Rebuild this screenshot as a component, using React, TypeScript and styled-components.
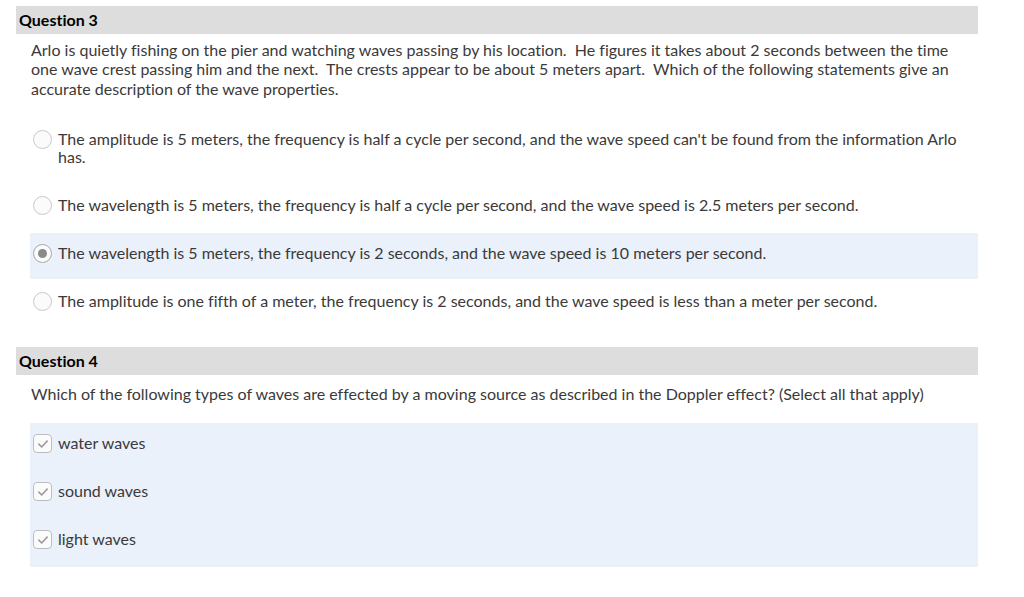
import React from "react";
import styled, { createGlobalStyle } from "styled-components";

const GlobalStyle = createGlobalStyle`
  html, body {
    margin: 0;
    padding: 0;
    background: #ffffff;
  }
  body {
    font-family: Lato, "Open Sans", "Liberation Sans", sans-serif;
    font-variant-ligatures: none;
    -webkit-font-smoothing: antialiased;
  }
`;

type Choice = {
  text: string;
  selected?: boolean;
};

const q3Choices: Choice[] = [
  {
    text: "The amplitude is 5 meters, the frequency is half a cycle per second, and the wave speed can't be found from the information Arlo has.",
  },
  {
    text: "The wavelength is 5 meters, the frequency is half a cycle per second, and the wave speed is 2.5 meters per second.",
  },
  {
    text: "The wavelength is 5 meters, the frequency is 2 seconds, and the wave speed is 10 meters per second.",
    selected: true,
  },
  {
    text: "The amplitude is one fifth of a meter, the frequency is 2 seconds, and the wave speed is less than a meter per second.",
  },
];

const q4Choices = ["water waves", "sound waves", "light waves"];

const App = () => {
  return (
    <>
      <GlobalStyle />
      <Page>
        <Question>
          <QuestionHeader>Question 3</QuestionHeader>
          <Prompt>
            Arlo is quietly fishing on the pier and watching waves passing by his location.&nbsp; He figures it takes
            about 2 seconds between the time one wave crest passing him and the next.&nbsp; The crests appear to be
            about 5 meters apart.&nbsp; Which of the following statements give an accurate description of the wave
            properties.
          </Prompt>
          <ChoiceList>
            {q3Choices.map((c, i) => (
              <RadioRow key={i} $selected={!!c.selected}>
                <Radio $checked={!!c.selected} />
                <ChoiceText>{c.text}</ChoiceText>
              </RadioRow>
            ))}
          </ChoiceList>
        </Question>

        <Question>
          <QuestionHeader>Question 4</QuestionHeader>
          <ShortPrompt>
            Which of the following types of waves are effected by a moving source as described in the Doppler effect?
            (Select all that apply)
          </ShortPrompt>
          <CheckGroup>
            {q4Choices.map((label) => (
              <CheckRow key={label}>
                <CheckBox>
                  <svg width="12" height="10" viewBox="0 0 12 10">
                    <path d="M1.8 5.2 L4.7 8 L10.2 2" fill="none" stroke="#9a9a9a" strokeWidth="1.6" strokeLinecap="round" strokeLinejoin="round" />
                  </svg>
                </CheckBox>
                <ChoiceText>{label}</ChoiceText>
              </CheckRow>
            ))}
          </CheckGroup>
        </Question>
      </Page>
    </>
  );
};

const Page = styled.div`
  width: 962px;
  padding: 6px 0 0 16px;
  display: flex;
  flex-direction: column;
  gap: 20px;
`;

const Question = styled.section`
  display: flex;
  flex-direction: column;
`;

const QuestionHeader = styled.h2`
  margin: 0;
  height: 28px;
  line-height: 28px;
  padding-left: 3px;
  background: #dddddd;
  color: #000000;
  font-size: 16px;
  font-weight: 700;
`;

const Prompt = styled.p`
  margin: 6px 12px 21px 15px;
  color: #3a3a3a;
  font-size: 16px;
  line-height: 19.3px;
`;

const ShortPrompt = styled(Prompt)`
  margin: 9px 12px 20px 15px;
`;

const ChoiceList = styled.div`
  display: flex;
  flex-direction: column;
  gap: 2px;
  margin-left: 14px;
`;

const RadioRow = styled.div<{ $selected: boolean }>`
  display: flex;
  align-items: flex-start;
  gap: 6px;
  padding: 11px 14px 17px 3px;
  background: ${(p) => (p.$selected ? "#eaf1fb" : "transparent")};
`;

const Radio = styled.span<{ $checked: boolean }>`
  position: relative;
  flex: none;
  box-sizing: border-box;
  width: 19px;
  height: 19px;
  margin-bottom: -1px;
  border-radius: 50%;
  border: 1px solid ${(p) => (p.$checked ? "#a8a8a8" : "#c9c9c9")};
  background: #fbfbfc;

  &::after {
    content: "";
    display: ${(p) => (p.$checked ? "block" : "none")};
    position: absolute;
    left: 4px;
    top: 4px;
    width: 9px;
    height: 9px;
    border-radius: 50%;
    background: #8a8a8a;
  }
`;

const ChoiceText = styled.span`
  color: #3a3a3a;
  font-size: 16px;
  line-height: 18px;
`;

const CheckGroup = styled.div`
  display: flex;
  flex-direction: column;
  margin-left: 14px;
  background: #eaf1fb;
`;

const CheckRow = styled.div`
  display: flex;
  align-items: flex-start;
  gap: 6px;
  height: 48px;
  box-sizing: border-box;
  padding: 11px 14px 0 3px;
`;

const CheckBox = styled.span`
  flex: none;
  box-sizing: border-box;
  width: 19px;
  height: 19px;
  border-radius: 4px;
  border: 1px solid #bdbdbd;
  background: #fbfbfc;
  display: flex;
  align-items: center;
  justify-content: center;
`;

export default App;
